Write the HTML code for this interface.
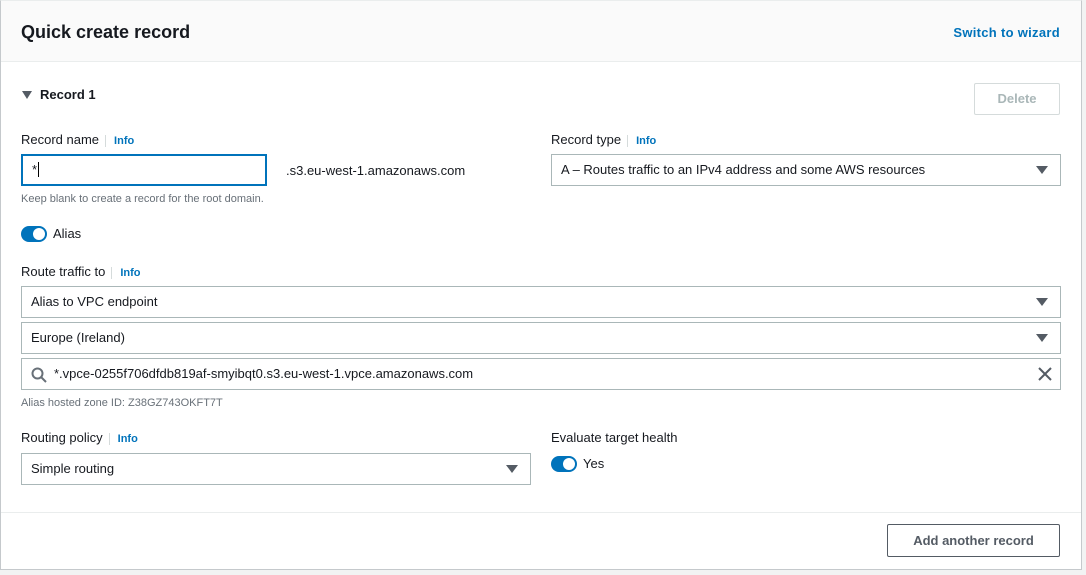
<!DOCTYPE html>
<html><head><style>
*{box-sizing:border-box;margin:0;padding:0}
body{width:1086px;height:575px;background:#f2f3f3;font-family:"Liberation Sans",sans-serif;font-size:13px;color:#16191f;position:relative;overflow:hidden}
.card{position:absolute;left:0;top:0;width:1082px;height:570px;background:#fff;border:1px solid #c5c9cc;border-top:1px solid #eaeded}
.hdr{position:absolute;left:0;top:0;width:100%;height:61px;background:#fafafa;border-bottom:1px solid #eaeded}
.a{position:absolute;white-space:nowrap}
.info{color:#0073bb;font-weight:bold;font-size:11px;border-left:1px solid #d5dbdb;padding-left:8px;margin-left:6px}
.box{position:absolute;border:1px solid #aab7b8;height:32px;padding:0 9px;line-height:30px;background:#fff}
.tri{position:absolute;right:12px;top:11px;width:0;height:0;border-left:6px solid transparent;border-right:6px solid transparent;border-top:8px solid #545b64}
.tog{position:absolute;width:26px;height:16px;border-radius:8px;background:#0073bb}
.tog::after{content:"";position:absolute;right:2px;top:2px;width:12px;height:12px;border-radius:50%;background:#fff}
.btn{position:absolute;border:1px solid #545b64;font-weight:bold;color:#545b64;text-align:center;border-radius:2px}
.hint{color:#687078;font-size:11px}
</style></head><body>
<div class="card">
<div class="hdr"></div>
<div class="a" style="left:20px;top:21px;font-size:18px;font-weight:bold">Quick create record</div>
<div class="a" style="right:21px;top:24px;color:#0073bb;font-weight:bold;letter-spacing:0.3px">Switch to wizard</div>
<div class="a" style="left:21px;top:90px;width:0;height:0;border-left:5px solid transparent;border-right:5px solid transparent;border-top:8px solid #545b64"></div>
<div class="a" style="left:39px;top:86px;font-weight:bold">Record 1</div>
<div class="btn" style="left:973px;top:82px;width:86px;height:32px;line-height:30px;border-color:#d5dbdb;color:#aab7b8">Delete</div>
<div class="a" style="left:20px;top:131px">Record name<span class="info">Info</span></div>
<div class="box" style="left:20px;top:153px;width:246px;border:2px solid #0073bb;line-height:28px">*<span style="border-left:1px solid #000;margin-left:1px"></span></div>
<div class="a" style="left:285px;top:162px">.s3.eu-west-1.amazonaws.com</div>
<div class="a hint" style="left:20px;top:192px">Keep blank to create a record for the root domain.</div>
<div class="tog" style="left:20px;top:225px"></div>
<div class="a" style="left:52px;top:225px">Alias</div>
<div class="a" style="left:550px;top:131px">Record type<span class="info">Info</span></div>
<div class="box" style="left:550px;top:153px;width:510px">A – Routes traffic to an IPv4 address and some AWS resources<i class="tri"></i></div>
<div class="a" style="left:20px;top:263px">Route traffic to<span class="info">Info</span></div>
<div class="box" style="left:20px;top:285px;width:1040px">Alias to VPC endpoint<i class="tri"></i></div>
<div class="box" style="left:20px;top:321px;width:1040px">Europe (Ireland)<i class="tri"></i></div>
<div class="box" style="left:20px;top:357px;width:1040px;padding-left:32px">*.vpce-0255f706dfdb819af-smyibqt0.s3.eu-west-1.vpce.amazonaws.com
<svg style="position:absolute;left:9px;top:8px" width="16" height="16"><circle cx="6.5" cy="6.5" r="5" fill="none" stroke="#687078" stroke-width="2"/><path d="M10 10l5 5" stroke="#687078" stroke-width="2"/></svg>
<svg style="position:absolute;right:8px;top:8px" width="14" height="14"><path d="M1 1l12 12M13 1L1 13" stroke="#545b64" stroke-width="2"/></svg></div>
<div class="a hint" style="left:20px;top:396px">Alias hosted zone ID: Z38GZ743OKFT7T</div>
<div class="a" style="left:20px;top:429px">Routing policy<span class="info">Info</span></div>
<div class="box" style="left:20px;top:452px;width:510px">Simple routing<i class="tri"></i></div>
<div class="a" style="left:550px;top:429px">Evaluate target health</div>
<div class="tog" style="left:550px;top:455px"></div>
<div class="a" style="left:582px;top:455px">Yes</div>
<div class="a" style="left:0;top:511px;width:100%;border-top:1px solid #eaeded"></div>
<div class="btn" style="left:886px;top:523px;width:173px;height:33px;line-height:31px">Add another record</div>
</div>
</body></html>
